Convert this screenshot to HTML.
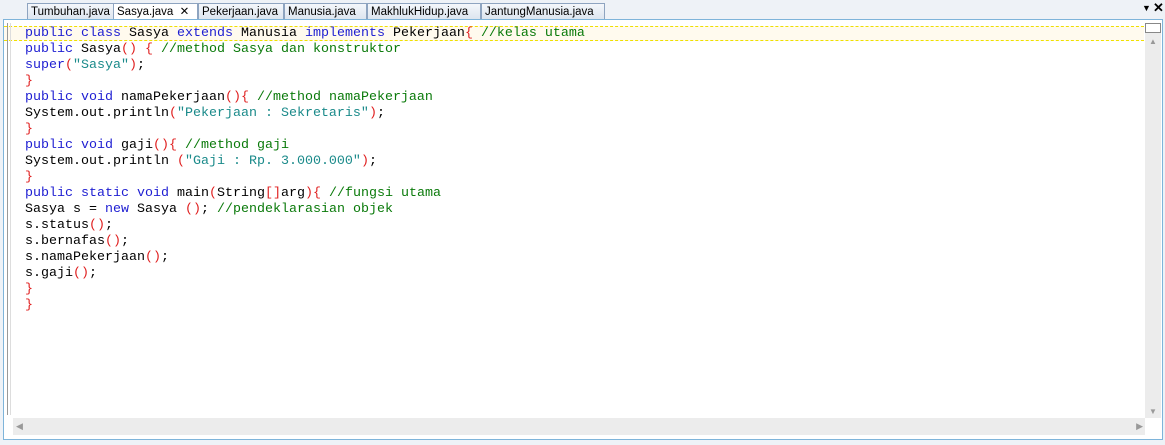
<!DOCTYPE html>
<html><head><style>
body{margin:0;width:1165px;height:445px;background:#eef2f7;position:relative;overflow:hidden;font-family:"Liberation Sans",sans-serif}
.tab{position:absolute;top:3px;height:16px;border:1px solid #8ea4c0;border-bottom:none;background:linear-gradient(#f4f7fb,#dde5ef);font-size:11.5px;line-height:16px;padding-left:3px;box-sizing:border-box;color:#000;white-space:nowrap;overflow:hidden}
.tab.act{background:#fff;height:17px}
.ed{position:absolute;left:3px;top:19px;width:1160px;height:421px;border:1px solid #7eb4da;background:#fff;box-sizing:border-box}
.code{position:absolute;left:25px;top:26px;font-family:"Liberation Mono",monospace;font-size:13.33px;line-height:16px;white-space:pre;color:#000}
.k{color:#1e1ed2}.c{color:#0a7a0a}.s{color:#1a8a8a}.p{color:#e02020}
</style></head><body>
<div class="tab" style="left:27px;width:87px">Tumbuhan.java</div>
<div class="tab act" style="left:113px;width:85px">Sasya.java&nbsp;&nbsp;✕</div>
<div class="tab" style="left:198px;width:86px">Pekerjaan.java</div>
<div class="tab" style="left:284px;width:83px">Manusia.java</div>
<div class="tab" style="left:367px;width:114px">MakhlukHidup.java</div>
<div class="tab" style="left:481px;width:124px">JantungManusia.java</div>
<div style="position:absolute;left:1142px;top:3px;font-size:9px">▼</div>
<div style="position:absolute;left:1153px;top:0px;font-size:13px;font-weight:bold">✕</div>
<div class="ed">
<div style="position:absolute;left:0;top:6px;width:1140px;height:15px;background:#fffaee;border-top:1px dashed #f0e000;border-bottom:1px dashed #f0e000;box-sizing:border-box"></div>
<div style="position:absolute;left:3px;top:3px;width:2px;height:392px;border-left:1px solid #999;border-right:1px solid #ddd"></div>
<div style="position:absolute;left:1141px;top:3px;width:16px;height:395px;background:#ececec"><div style="height:8px;border:1px solid #888;background:#fff"></div><div style="text-align:center;font-size:8px;color:#999;margin-top:4px">▲</div><div style="position:absolute;bottom:2px;width:16px;text-align:center;font-size:8px;color:#999">▼</div></div>
<div style="position:absolute;left:9px;top:398px;width:1132px;height:17px;background:#ececec;font-size:9px;color:#999;line-height:17px"><span style="margin-left:3px">◀</span><span style="position:absolute;right:2px">▶</span></div>
</div>
<div class="code"><span class="k">public class</span> Sasya <span class="k">extends</span> Manusia <span class="k">implements</span> Pekerjaan<span class="p">{</span> <span class="c">//kelas utama</span>
<span class="k">public</span> Sasya<span class="p">()</span> <span class="p">{</span> <span class="c">//method Sasya dan konstruktor</span>
<span class="k">super</span><span class="p">(</span><span class="s">"Sasya"</span><span class="p">)</span>;
<span class="p">}</span>
<span class="k">public void</span> namaPekerjaan<span class="p">(){</span> <span class="c">//method namaPekerjaan</span>
System.out.println<span class="p">(</span><span class="s">"Pekerjaan : Sekretaris"</span><span class="p">)</span>;
<span class="p">}</span>
<span class="k">public void</span> gaji<span class="p">(){</span> <span class="c">//method gaji</span>
System.out.println <span class="p">(</span><span class="s">"Gaji : Rp. 3.000.000"</span><span class="p">)</span>;
<span class="p">}</span>
<span class="k">public static void</span> main<span class="p">(</span>String<span class="p">[]</span>arg<span class="p">){</span> <span class="c">//fungsi utama</span>
Sasya s = <span class="k">new</span> Sasya <span class="p">()</span>; <span class="c">//pendeklarasian objek</span>
s.status<span class="p">()</span>;
s.bernafas<span class="p">()</span>;
s.namaPekerjaan<span class="p">()</span>;
s.gaji<span class="p">()</span>;
<span class="p">}</span>
<span class="p">}</span></div>
</body></html>
